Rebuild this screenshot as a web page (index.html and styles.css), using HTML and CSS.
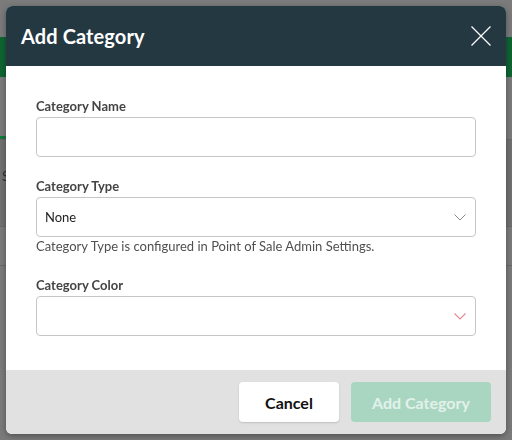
FILE: index.html
```html
<!DOCTYPE html>
<html>
<head>
<meta charset="utf-8">
<link rel="stylesheet" href="styles.css">
</head>
<body>
<div class="app">
  <div class="app-top"></div>
  <div class="app-bar"></div>
  <div class="app-gap"></div>
  <div class="app-tabline"></div>
  <div class="app-row app-row-dark"><span class="app-letter">S</span></div>
  <div class="app-row"></div>
  <div class="app-row"></div>
</div>

<div class="modal">
  <div class="modal-header">
    <h1 class="modal-title">Add Category</h1>
    <button class="close-btn" aria-label="Close">
      <svg width="20" height="20" viewBox="0 0 20 20"><path d="M0.5 0.5 L19.5 19.5 M19.5 0.5 L0.5 19.5" stroke="#ffffff" stroke-width="1.2" fill="none"/></svg>
    </button>
  </div>
  <div class="modal-body">
    <div class="field">
      <label class="field-label">Category Name</label>
      <div class="input"></div>
    </div>
    <div class="field">
      <label class="field-label">Category Type</label>
      <div class="input select">
        <span class="select-value">None</span>
        <svg class="chevron" width="12" height="7" viewBox="0 0 12 7"><path d="M0.5 0.5 L6 6 L11.5 0.5" stroke="#8a8a8a" stroke-width="1" fill="none"/></svg>
      </div>
      <div class="help">Category Type is configured in Point of Sale Admin Settings.</div>
    </div>
    <div class="field">
      <label class="field-label">Category Color</label>
      <div class="input select">
        <span class="select-value"></span>
        <svg class="chevron" width="12" height="7" viewBox="0 0 12 7"><path d="M0.5 0.5 L6 6 L11.5 0.5" stroke="#e08894" stroke-width="1.1" fill="none"/></svg>
      </div>
    </div>
  </div>
  <div class="modal-footer">
    <button class="btn btn-cancel">Cancel</button>
    <button class="btn btn-primary">Add Category</button>
  </div>
</div>
</body>
</html>
```

FILE: styles.css
```css
html, body {
  margin: 0;
  padding: 0;
}
body {
  width: 512px;
  height: 440px;
  overflow: hidden;
  background: #7b7b7b;
  font-family: "Lato", "Open Sans", sans-serif;
}
.app {
  display: flex;
  flex-direction: column;
}
.app-top { height: 37px; }
.app-bar { height: 40px; background: #0f6534; }
.app-gap { height: 59px; }
.app-tabline { height: 3px; background: #147a3e; width: 30px; }
.app-row {
  height: 38px;
  border-top: 1px solid #6a6a6a;
  position: relative;
}
.app-row-dark { height: 86px; background: #717171; }
.app-letter {
  position: absolute;
  left: 2px;
  top: 28px;
  font-size: 13px;
  color: #333;
}

.modal {
  position: fixed;
  top: 6px;
  left: 6px;
  width: 500px;
  height: 428px;
  border-radius: 6px;
  overflow: hidden;
  background: #ffffff;
  box-shadow: 0 2px 6px rgba(0,0,0,0.35);
  display: flex;
  flex-direction: column;
}
.modal-header {
  height: 60px;
  flex: none;
  background: #243842;
  display: flex;
  align-items: center;
  justify-content: space-between;
  padding: 0 15px 0 15px;
}
.modal-title {
  margin: 0;
  color: #ffffff;
  font-size: 20px;
  font-weight: 700;
  letter-spacing: 0.1px;
}
.close-btn {
  background: none;
  border: 0;
  padding: 0;
  width: 20px;
  height: 20px;
  display: block;
}
.close-btn svg { display: block; }
.modal-body {
  flex: 1;
  padding: 32px 30px 0 30px;
  display: flex;
  flex-direction: column;
  gap: 21px;
}
.field {
  display: flex;
  flex-direction: column;
}
.field-label {
  font-size: 13px;
  font-weight: 700;
  color: #444;
  line-height: 16px;
  margin-bottom: 3px;
}
.input {
  height: 38px;
  border: 1px solid #c6c6c6;
  border-radius: 4px;
  background: #fff;
  box-sizing: content-box;
}
.select {
  display: flex;
  align-items: center;
  justify-content: space-between;
  padding: 0 9px 0 8px;
}
.select-value {
  font-size: 13px;
  color: #222;
}
.chevron { display: block; }
.help {
  font-size: 13px;
  color: #505050;
  line-height: 16px;
  margin-top: 1px;
  margin-bottom: 2px;
}
.modal-footer {
  height: 64px;
  flex: none;
  background: #e1e1e1;
  display: flex;
  justify-content: flex-end;
  align-items: center;
  gap: 12px;
  padding: 0 15px;
}
.btn {
  height: 40px;
  border: 0;
  border-radius: 4px;
  font-family: inherit;
  font-size: 16px;
  font-weight: 700;
}
.btn-cancel {
  width: 100px;
  background: #ffffff;
  color: #111;
  box-shadow: 0 1px 2px rgba(0,0,0,0.15);
}
.btn-primary {
  width: 140px;
  background: #a9d6c1;
  color: #e2f1ea;
}
```
